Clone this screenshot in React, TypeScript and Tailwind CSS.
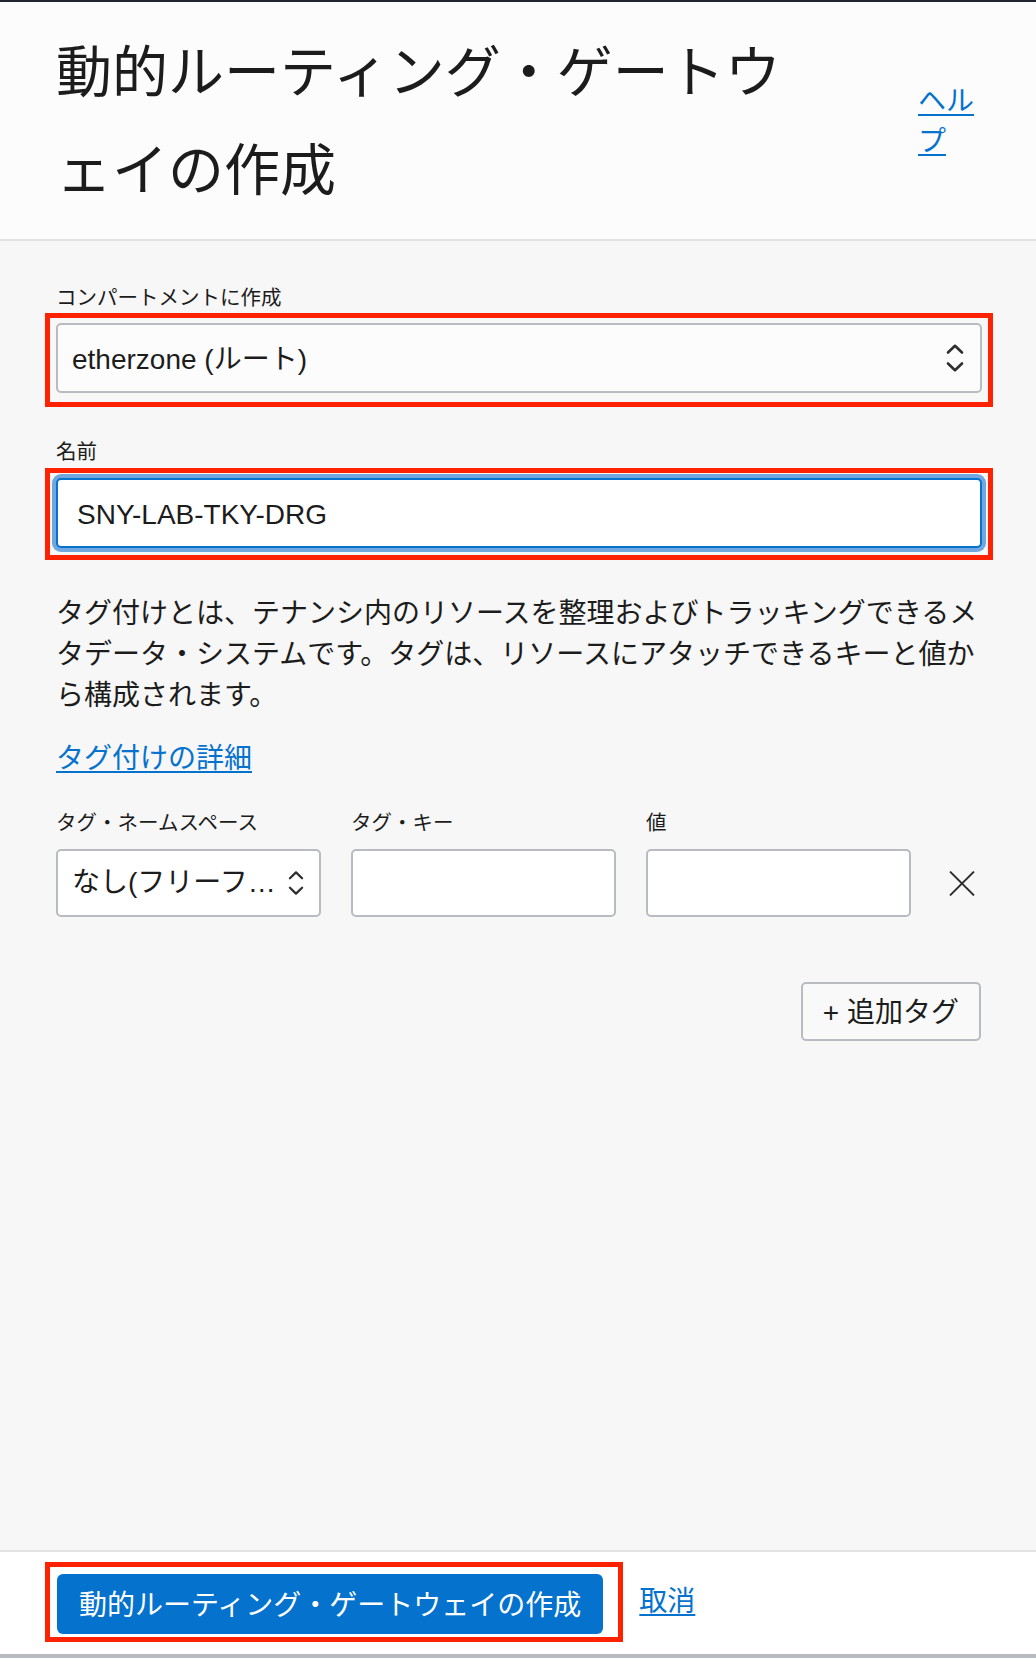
import { useState } from "react";

const FONT = "font-['Liberation_Sans','Noto_Sans_CJK_JP',sans-serif]";

function UpDown({ className }: { className?: string }) {
    return (
        <svg
            width="18"
            height="30"
            viewBox="0 0 18 30"
            fill="none"
            stroke="#2e2e2e"
            strokeWidth="2.6"
            strokeLinecap="round"
            strokeLinejoin="round"
            className={className}
        >
            <path d="M2 9.5 9 2.8l7 6.7" />
            <path d="M2 20.5 9 27.2l7-6.7" />
        </svg>
    );
}

function CloseIcon() {
    return (
        <svg width="26" height="25" viewBox="0 0 26 25" fill="none" stroke="#2b2b2b" strokeWidth="1.8">
            <path d="M1 0.5 25 24.5" />
            <path d="M25 0.5 1 24.5" />
        </svg>
    );
}

// red annotation frame drawn around a field, keeps the inner content on the 56px column
function Mark({ className, children }: { className: string; children: React.ReactNode }) {
    return <div className={`border-[5px] border-[#ff2200] ${className}`}>{children}</div>;
}

export default function App() {
    const [name, setName] = useState("SNY-LAB-TKY-DRG");

    return (
        <div className={`flex h-[1658px] w-[1036px] flex-col border-t-2 border-[#1f2630] bg-[#f7f7f7] text-[#1c1c1c] ${FONT}`}>
            <header className="flex items-center justify-between border-b-2 border-[#e3e3e3] bg-[#fcfcfc] pt-[22px] pr-[54px] pb-[19px] pl-[56px]">
                <h1 className="w-[740px] text-[56px] leading-[98px] font-normal">動的ルーティング・ゲートウェイの作成</h1>
                <a href="#" className="w-[64px] text-[28px] leading-[40px] text-[#0572ce] underline decoration-2 underline-offset-[3px]">
                    ヘルプ
                </a>
            </header>

            <main className="flex flex-1 flex-col pt-[43px] pr-[54px] pl-[56px]">
                <label className="text-[20.5px] leading-[28px]">コンパートメントに作成</label>
                <Mark className="-mx-[11px] mt-px px-[6px] pt-[5px] pb-[9px]">
                    <div className="flex h-[70px] items-center justify-between rounded-[5px] border-2 border-[#b8bcc1] bg-[#fcfcfc] pt-[4px] pr-[16px] pl-[14px] text-[28px]">
                        <span>etherzone (ルート)</span>
                        <UpDown className="-mt-[4px]" />
                    </div>
                </Mark>

                <label className="mt-[31px] text-[20.5px] leading-[28px]">名前</label>
                <Mark className="-mx-[11px] mt-[2px] px-[6px] pt-[5px] pb-[7px]">
                    <input
                        value={name}
                        onChange={(e) => setName(e.target.value)}
                        className="block h-[70px] w-full rounded-[5px] border-2 border-[#0572ce] bg-white px-[19px] pt-[3px] text-[28px] shadow-[0_0_0_4px_#72a6de] outline-none"
                    />
                </Mark>

                <p className="mt-[33px] text-[28px] leading-[41px]">
                    タグ付けとは、テナンシ内のリソースを整理およびトラッキングできるメタデータ・システムです。タグは、リソースにアタッチできるキーと値から構成されます。
                </p>
                <a href="#" className="mt-[23px] self-start text-[28px] leading-[40px] text-[#0572ce] underline decoration-2 underline-offset-[3px]">
                    タグ付けの詳細
                </a>

                <div className="mt-[30px] grid grid-cols-[265px_265px_265px_1fr] gap-x-[30px] gap-y-[12px]">
                    <div className="text-[20.5px] leading-[28px]">タグ・ネームスペース</div>
                    <div className="text-[20.5px] leading-[28px]">タグ・キー</div>
                    <div className="text-[20.5px] leading-[28px]">値</div>
                    <div />
                    <div className="flex h-[68px] items-center rounded-[5px] border-2 border-[#b8bcc1] bg-white pr-[14px] pl-[14px]">
                        <span className="min-w-0 flex-1 truncate text-[28px]">なし(フリーフォーム)</span>
                        <UpDown className="ml-[8px] h-[26px] shrink-0" />
                    </div>
                    <input className="h-[68px] rounded-[5px] border-2 border-[#b8bcc1] bg-white px-[14px] text-[28px] outline-none" />
                    <input className="h-[68px] rounded-[5px] border-2 border-[#b8bcc1] bg-white px-[14px] text-[28px] outline-none" />
                    <button className="flex items-center justify-center">
                        <CloseIcon />
                    </button>
                </div>

                <button className="mt-[65px] mr-px h-[59px] self-end rounded-[5px] border-2 border-[#b8bcc1] bg-[#f9f9f9] px-[20px] pt-[2px] text-[28px]">
                    + 追加タグ
                </button>
            </main>

            <footer className="flex items-center border-t-2 border-b-4 border-t-[#e3e3e3] border-b-[#b8bcc1] bg-white pt-[10px] pb-[12px] pl-[45px]">
                <Mark className="pt-[7px] pr-[15px] pb-[3px] pl-[7px]">
                    <button className="h-[60px] rounded-[6px] bg-[#0572ce] px-[22px] pt-[3px] text-[28px] text-white">
                        動的ルーティング・ゲートウェイの作成
                    </button>
                </Mark>
                <a href="#" className="ml-[16px] text-[28px] text-[#0572ce] underline decoration-2 underline-offset-[3px]">
                    取消
                </a>
            </footer>
        </div>
    );
}
